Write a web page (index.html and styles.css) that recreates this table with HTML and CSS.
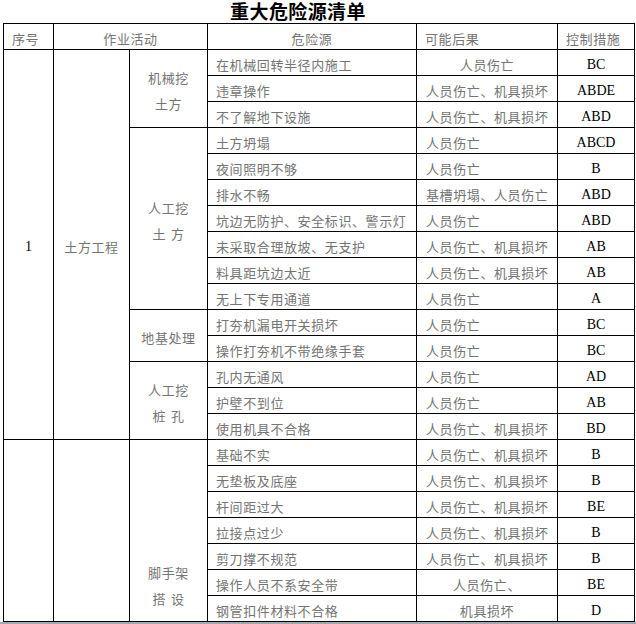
FILE: index.html
```html
<!DOCTYPE html>
<html lang="zh-CN">
<head>
<meta charset="utf-8">
<title>重大危险源清单</title>
<link rel="stylesheet" href="styles.css">
</head>
<body>
<div class="page">
  <h1 class="title">重大危险源清单</h1>
  <table class="list">
    <colgroup>
      <col class="c-no">
      <col class="c-work">
      <col class="c-act">
      <col class="c-hazard">
      <col class="c-result">
      <col class="c-ctrl">
    </colgroup>
    <thead>
      <tr>
        <th class="left">序号</th>
        <th colspan="2">作业活动</th>
        <th>危险源</th>
        <th class="left">可能后果</th>
        <th class="left">控制措施</th>
      </tr>
    </thead>
    <tbody>
      <tr>
        <td rowspan="15" class="num">1</td>
        <td rowspan="15" class="center">土方工程</td>
        <td rowspan="3" class="center multi">机械挖<br>土方</td>
        <td>在机械回转半径内施工</td>
        <td class="center">人员伤亡</td>
        <td class="code">BC</td>
      </tr>
      <tr><td>违章操作</td><td>人员伤亡、机具损坏</td><td class="code">ABDE</td></tr>
      <tr><td>不了解地下设施</td><td>人员伤亡、机具损坏</td><td class="code">ABD</td></tr>
      <tr>
        <td rowspan="7" class="center multi">人工挖<br>土<span class="gap"></span>方</td>
        <td>土方坍塌</td><td>人员伤亡</td><td class="code">ABCD</td>
      </tr>
      <tr><td>夜间照明不够</td><td>人员伤亡</td><td class="code">B</td></tr>
      <tr><td>排水不畅</td><td>基槽坍塌、人员伤亡</td><td class="code">ABD</td></tr>
      <tr><td>坑边无防护、安全标识、警示灯</td><td>人员伤亡</td><td class="code">ABD</td></tr>
      <tr><td>未采取合理放坡、无支护</td><td>人员伤亡、机具损坏</td><td class="code">AB</td></tr>
      <tr><td>料具距坑边太近</td><td>人员伤亡、机具损坏</td><td class="code">AB</td></tr>
      <tr><td>无上下专用通道</td><td>人员伤亡</td><td class="code">A</td></tr>
      <tr>
        <td rowspan="2" class="center">地基处理</td>
        <td>打夯机漏电开关损坏</td><td>人员伤亡</td><td class="code">BC</td>
      </tr>
      <tr><td>操作打夯机不带绝缘手套</td><td>人员伤亡</td><td class="code">BC</td></tr>
      <tr>
        <td rowspan="3" class="center multi">人工挖<br>桩<span class="gap"></span>孔</td>
        <td>孔内无通风</td><td>人员伤亡</td><td class="code">AD</td>
      </tr>
      <tr><td>护壁不到位</td><td>人员伤亡</td><td class="code">AB</td></tr>
      <tr><td>使用机具不合格</td><td>人员伤亡、机具损坏</td><td class="code">BD</td></tr>
      <tr>
        <td rowspan="7"></td>
        <td rowspan="7"></td>
        <td rowspan="7" class="center multi low">脚手架<br>搭<span class="gap"></span>设</td>
        <td>基础不实</td><td>人员伤亡、机具损坏</td><td class="code">B</td>
      </tr>
      <tr><td>无垫板及底座</td><td>人员伤亡、机具损坏</td><td class="code">B</td></tr>
      <tr><td>杆间距过大</td><td>人员伤亡、机具损坏</td><td class="code">BE</td></tr>
      <tr><td>拉接点过少</td><td>人员伤亡、机具损坏</td><td class="code">B</td></tr>
      <tr><td>剪刀撑不规范</td><td>人员伤亡、机具损坏</td><td class="code">B</td></tr>
      <tr><td>操作人员不系安全带</td><td class="center">人员伤亡、</td><td class="code">BE</td></tr>
      <tr><td>钢管扣件材料不合格</td><td class="center">机具损坏</td><td class="code">D</td></tr>
    </tbody>
  </table>
  <div class="edge"></div>
</div>
</body>
</html>
```

FILE: styles.css
```css
html, body {
  margin: 0;
  padding: 0;
  background: #ffffff;
  overflow: hidden;
}

.page {
  width: 636px;
  font-family: "Noto Sans CJK SC", "Noto Sans", sans-serif;
}

.title {
  margin: 0;
  height: 21px;
  line-height: 21px;
  padding-top: 2px;
  padding-right: 40px;
  text-align: center;
  font-family: "Liberation Sans", "Noto Sans CJK SC", sans-serif;
  font-size: 19px;
  font-weight: 700;
  letter-spacing: 0.4px;
  color: #000;
}

.list {
  margin-left: 3px;
  width: 631px;
  table-layout: fixed;
  border-collapse: collapse;
}

.c-no { width: 50px; }
.c-work { width: 76px; }
.c-act { width: 78px; }
.c-hazard { width: 209px; }
.c-result { width: 141px; }
.c-ctrl { width: 77px; }

.list tr {
  height: 26px;
}

.list th,
.list td {
  border: 1px solid #000;
  padding: 5px 0 0 8px;
  height: 20px;
  line-height: 20px;
  font-size: 13px;
  font-weight: 400;
  letter-spacing: 0.6px;
  color: #747474;
  text-align: left;
  vertical-align: middle;
  white-space: nowrap;
  overflow: hidden;
}

.list th {
  text-align: center;
  padding-left: 0;
}

.list th.left {
  text-align: left;
  padding-left: 8px;
}

.list td:nth-last-child(2) {
  padding-left: 9px;
}

.list td.center {
  text-align: center;
  padding-left: 0;
}

.list td.multi {
  line-height: 26px;
}

.list td.low {
  vertical-align: bottom;
  padding-bottom: 9px;
}

.list td.code,
.list td.num {
  font-family: "Liberation Serif", "Times New Roman", serif;
  font-size: 14px;
  letter-spacing: 0;
  color: #000;
  text-align: center;
  padding-left: 0;
}

.gap {
  display: inline-block;
  width: 5px;
}

.edge {
  height: 2px;
  background: #a3a7ae;
}
```
